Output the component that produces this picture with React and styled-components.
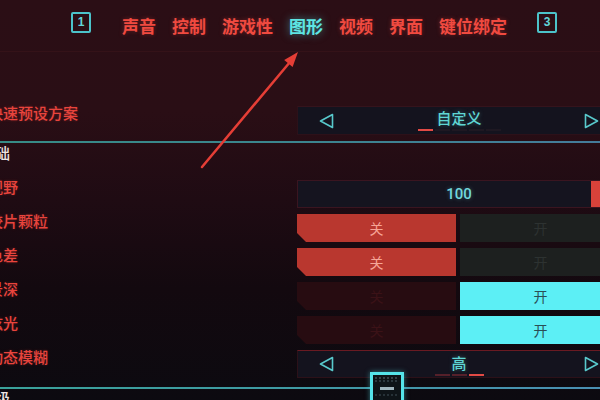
import React from 'react';
import styled, { createGlobalStyle } from 'styled-components';

const Global = createGlobalStyle`
  html, body { margin: 0; padding: 0; background: #0c0a10; }
  body {
    width: 600px; height: 400px; overflow: hidden;
    font-family: "Noto Sans CJK SC", "Noto Sans", sans-serif;
  }
`;

const Screen = styled.div`
  position: relative;
  width: 600px;
  height: 400px;
  overflow: hidden;
  display: flex;
  flex-direction: column;
  background: linear-gradient(180deg, #2b0e15 0%, #2a0e15 28%, #1f0b13 50%, #13090f 72%, #0c0a10 100%);
`;

const TabBar = styled.div`
  flex-shrink: 0;
  height: 52px;
  display: flex;
  align-items: center;
  padding-left: 71px;
  border-bottom: 1px solid rgba(255, 90, 90, 0.05);
  box-sizing: border-box;
`;

const KeyCap = styled.div`
  align-self: flex-start;
  margin-top: 12px;
  margin-right: ${p => p.$mr || 0}px;
  margin-left: ${p => p.$ml || 0}px;
  width: 20px;
  height: 21px;
  box-sizing: border-box;
  border: 2px solid #4cc3ca;
  border-radius: 2px;
  color: #62d6da;
  font: 700 12px/17px "Liberation Sans", sans-serif;
  text-align: center;
`;

const Tab = styled.span`
  margin-right: 16px;
  font: 700 17px/20px "Noto Sans CJK SC", sans-serif;
  color: ${p => (p.$active ? '#5ee6e4' : '#f04a40')};
  text-shadow: ${p => (p.$active ? '0 0 8px rgba(80,230,230,0.55)' : '0 0 4px rgba(240,70,60,0.35)')};
  white-space: nowrap;
`;

const Body = styled.div`
  display: flex;
  flex-direction: column;
  margin-top: 54px;
`;

const Row = styled.div`
  display: grid;
  grid-template-columns: 309px 324px;
  height: ${p => p.$h || 28}px;
  margin-left: -12px;
`;

const Label = styled.div`
  margin-top: -1px;
  color: #e8443d;
  font: 500 15px/15px "Noto Sans CJK SC", sans-serif;
  white-space: nowrap;
  text-shadow: 0 0 3px rgba(232, 68, 61, 0.3);
`;

const Divider = styled.div`
  height: 2px;
  margin-top: ${p => p.$mt}px;
  background: linear-gradient(90deg, #3aa29a 0%, #3f9aa4 50%, #4a8fb2 100%);
  opacity: ${p => p.$strong ? 1 : 0.85};
`;

const SectionTitle = styled.div`
  margin-top: ${p => p.$mt}px;
  margin-left: -20px;
  color: #ece4e2;
  font: 500 15px/16px "Noto Sans CJK SC", sans-serif;
  white-space: nowrap;
`;

const List = styled.div`
  display: flex;
  flex-direction: column;
  gap: 6px;
  margin-top: 19px;
`;

const Selector = styled.div`
  height: 100%;
  box-sizing: border-box;
  display: flex;
  align-items: center;
  justify-content: space-between;
  padding: 0 21px;
  background: #14131e;
  border: 1px solid #2c1119;
  border-top-color: ${p => (p.$accent ? '#6a1a22' : '#35131c')};
`;

const ValueStack = styled.div`
  display: flex;
  flex-direction: column;
  align-items: center;
  gap: ${p => p.$gap || 4}px;
  padding-top: ${p => p.$pt || 0}px;
`;

const ValueText = styled.span`
  color: #5fd6d4;
  font: 500 15px/15px "Noto Sans CJK SC", sans-serif;
  text-shadow: 0 0 4px rgba(90, 220, 220, 0.35);
`;

const Segments = styled.div`
  display: flex;
  gap: 2px;
`;

const Seg = styled.span`
  width: 15px;
  height: 2px;
  background: ${p => (p.$on ? '#e24a45' : p.$dim)};
`;

const Slider = styled.div`
  height: 100%;
  box-sizing: border-box;
  display: flex;
  align-items: center;
  justify-content: center;
  border: 1px solid #3a1520;
  color: #72d8dc;
  font: 500 15px/15px Roboto, "Liberation Sans", sans-serif;
  text-shadow: 0 0 4px rgba(100, 220, 225, 0.35);
`;

const Toggle = styled.div`
  height: 100%;
  display: flex;
  gap: 4px;
`;

const OFF_STYLES = {
  active: { bg: '#b9372f', fg: '#f6a597' },
  idle: { bg: '#270c11', fg: '#3b1217' },
};
const ON_STYLES = {
  active: { bg: '#5ceff5', fg: '#2b4d55' },
  idle: { bg: '#1d201f', fg: '#2d3231' },
};

const ToggleBtn = styled.div`
  height: 100%;
  ${p => (p.$off ? 'width: 159px;' : 'flex: 1;')}
  display: flex;
  align-items: center;
  justify-content: center;
  background: ${p => p.$c.bg};
  color: ${p => p.$c.fg};
  font: 400 14px/14px "Noto Sans CJK SC", sans-serif;
  clip-path: ${p => (p.$off ? 'polygon(0 0, 100% 0, 100% 100%, 9px 100%, 0 calc(100% - 9px))' : 'none')};
`;

const Overlay = styled.svg`
  position: absolute;
  left: 0;
  top: 0;
  pointer-events: none;
`;

const CursorBox = styled.div`
  position: absolute;
  left: 370px;
  top: 372px;
  width: 34px;
  height: 34px;
  box-sizing: border-box;
  border: 3px solid #55e4ea;
  background: #0e1418;
  box-shadow: 0 0 5px rgba(85, 228, 234, 0.5);
`;

const Tri = ({ dir }) => (
  <svg width="15" height="16" viewBox="0 0 15 16">
    <polygon
      points={dir === 'left' ? '13.5,1.5 1.5,8 13.5,14.5' : '1.5,1.5 13.5,8 1.5,14.5'}
      fill="none"
      stroke="#58c9cc"
      strokeWidth="1.6"
      strokeLinejoin="round"
    />
  </svg>
);

const SelectControl = ({ value, segments, active, dim, accent, gap, pt }) => (
  <Selector $accent={accent}>
    <Tri dir="left" />
    <ValueStack $gap={gap} $pt={pt}>
      <ValueText>{value}</ValueText>
      <Segments>
        {Array.from({ length: segments }).map((_, i) => (
          <Seg key={i} $on={i === active} $dim={dim} />
        ))}
      </Segments>
    </ValueStack>
    <Tri dir="right" />
  </Selector>
);

const ToggleControl = ({ on }) => (
  <Toggle>
    <ToggleBtn $off $c={on ? OFF_STYLES.idle : OFF_STYLES.active}>关</ToggleBtn>
    <ToggleBtn $c={on ? ON_STYLES.active : ON_STYLES.idle}>开</ToggleBtn>
  </Toggle>
);

const TABS = ['声音', '控制', '游戏性', '图形', '视频', '界面', '键位绑定'];

export default function App() {
  const fill = 91;
  return (
    <>
      <Global />
      <Screen>
        <TabBar>
          <KeyCap $mr={31}>1</KeyCap>
          {TABS.map(t => (
            <Tab key={t} $active={t === '图形'}>{t}</Tab>
          ))}
          <KeyCap $ml={14}>3</KeyCap>
        </TabBar>

        <Body>
          <Row $h={29}>
            <Label>快速预设方案</Label>
            <SelectControl value="自定义" segments={5} active={0} dim="#1e1822" />
          </Row>
          <Divider $mt={6} />
          <SectionTitle $mt={2}>基础</SectionTitle>

          <List>
            <Row>
              <Label>视野</Label>
              <Slider
                style={{
                  background: `linear-gradient(90deg, #15141f ${fill}%, #d8423a ${fill}%)`,
                }}
              >
                100
              </Slider>
            </Row>
            <Row>
              <Label>胶片颗粒</Label>
              <ToggleControl on={false} />
            </Row>
            <Row>
              <Label>色差</Label>
              <ToggleControl on={false} />
            </Row>
            <Row>
              <Label>景深</Label>
              <ToggleControl on />
            </Row>
            <Row>
              <Label>眩光</Label>
              <ToggleControl on />
            </Row>
            <Row>
              <Label>动态模糊</Label>
              <SelectControl value="高" segments={3} active={2} dim="#55202a" accent gap={4} pt={2} />
            </Row>
          </List>

          <Divider $mt={9} $strong />
          <SectionTitle $mt={1}>高级</SectionTitle>
        </Body>

        <CursorBox>
          <svg width="28" height="28" viewBox="0 0 28 28">
            <line x1="2" y1="3" x2="26" y2="3" stroke="#5c7078" strokeWidth="1" strokeDasharray="2 2" />
            <line x1="2" y1="6" x2="26" y2="6" stroke="#4a5c64" strokeWidth="1" strokeDasharray="2 2" />
            <rect x="7" y="12" width="14" height="3" fill="#9fb4bc" />
            <line x1="2" y1="20" x2="26" y2="20" stroke="#3e4e56" strokeWidth="1" strokeDasharray="2 2" />
          </svg>
        </CursorBox>

        <Overlay width="600" height="400" viewBox="0 0 600 400">
          <line x1="202" y1="167" x2="290" y2="62" stroke="#e53e36" strokeWidth="2.5" strokeLinecap="round" />
          <polygon points="298,52 292.6,67 284.2,60" fill="#e53e36" />
        </Overlay>
      </Screen>
    </>
  );
}
